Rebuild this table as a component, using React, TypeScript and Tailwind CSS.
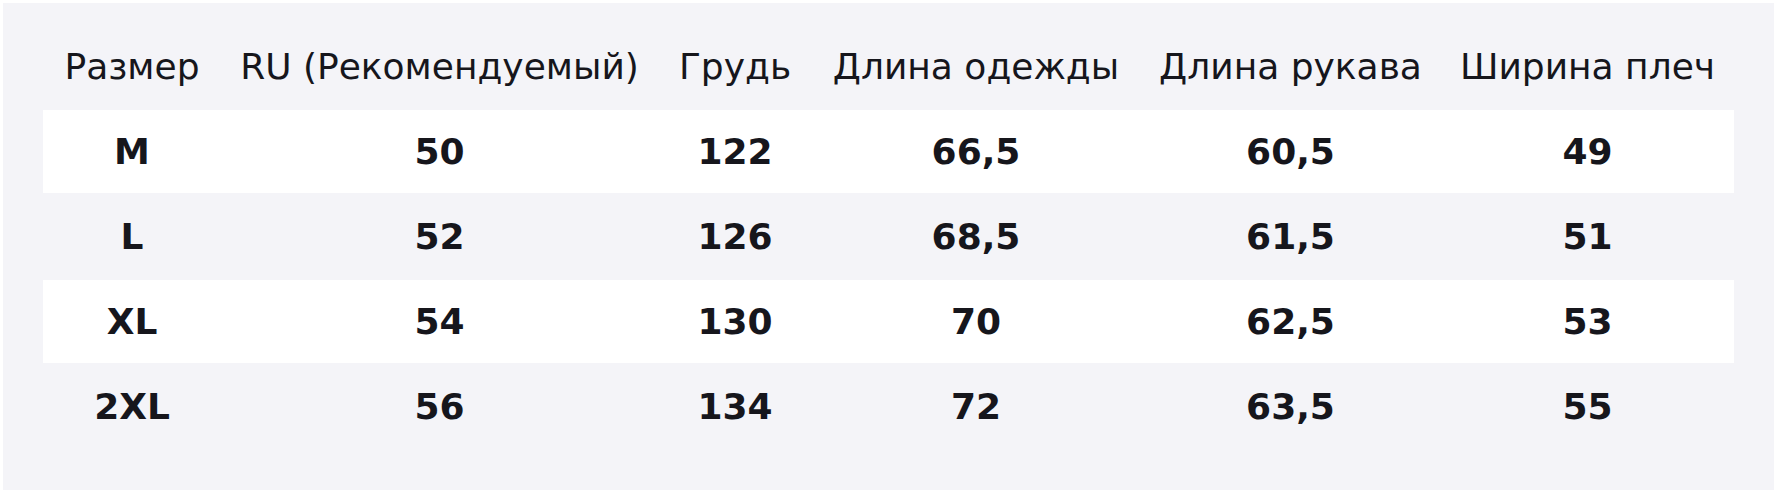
const headers = [
  "Размер",
  "RU (Рекомендуемый)",
  "Грудь",
  "Длина одежды",
  "Длина рукава",
  "Ширина плеч",
];

const rows = [
  ["M", "50", "122", "66,5", "60,5", "49"],
  ["L", "52", "126", "68,5", "61,5", "51"],
  ["XL", "54", "130", "70", "62,5", "53"],
  ["2XL", "56", "134", "72", "63,5", "55"],
];

const cols = "grid grid-cols-[178px_437px_154px_328px_301px_1fr]";

export default function App() {
  return (
    <div className="bg-white p-[3px] font-['DejaVu_Sans',sans-serif] text-[#16161c]">
      <div className="bg-[#f4f4f8] px-10 pt-[21px] pb-[41px]">
        <div className={`${cols} h-[85px] items-center text-[36px] leading-none`}>
          {headers.map((h) => (
            <div key={h} className="text-center whitespace-nowrap">
              {h}
            </div>
          ))}
        </div>
        {rows.map((row, i) => (
          <div
            key={row[0]}
            className={
              i % 2 === 0
                ? `${cols} my-px h-[83px] items-center bg-white`
                : `${cols} h-[85px] items-center`
            }
          >
            {row.map((cell, j) => (
              <div key={j} className="text-center text-[36px] font-bold leading-none">
                {cell}
              </div>
            ))}
          </div>
        ))}
      </div>
    </div>
  );
}
